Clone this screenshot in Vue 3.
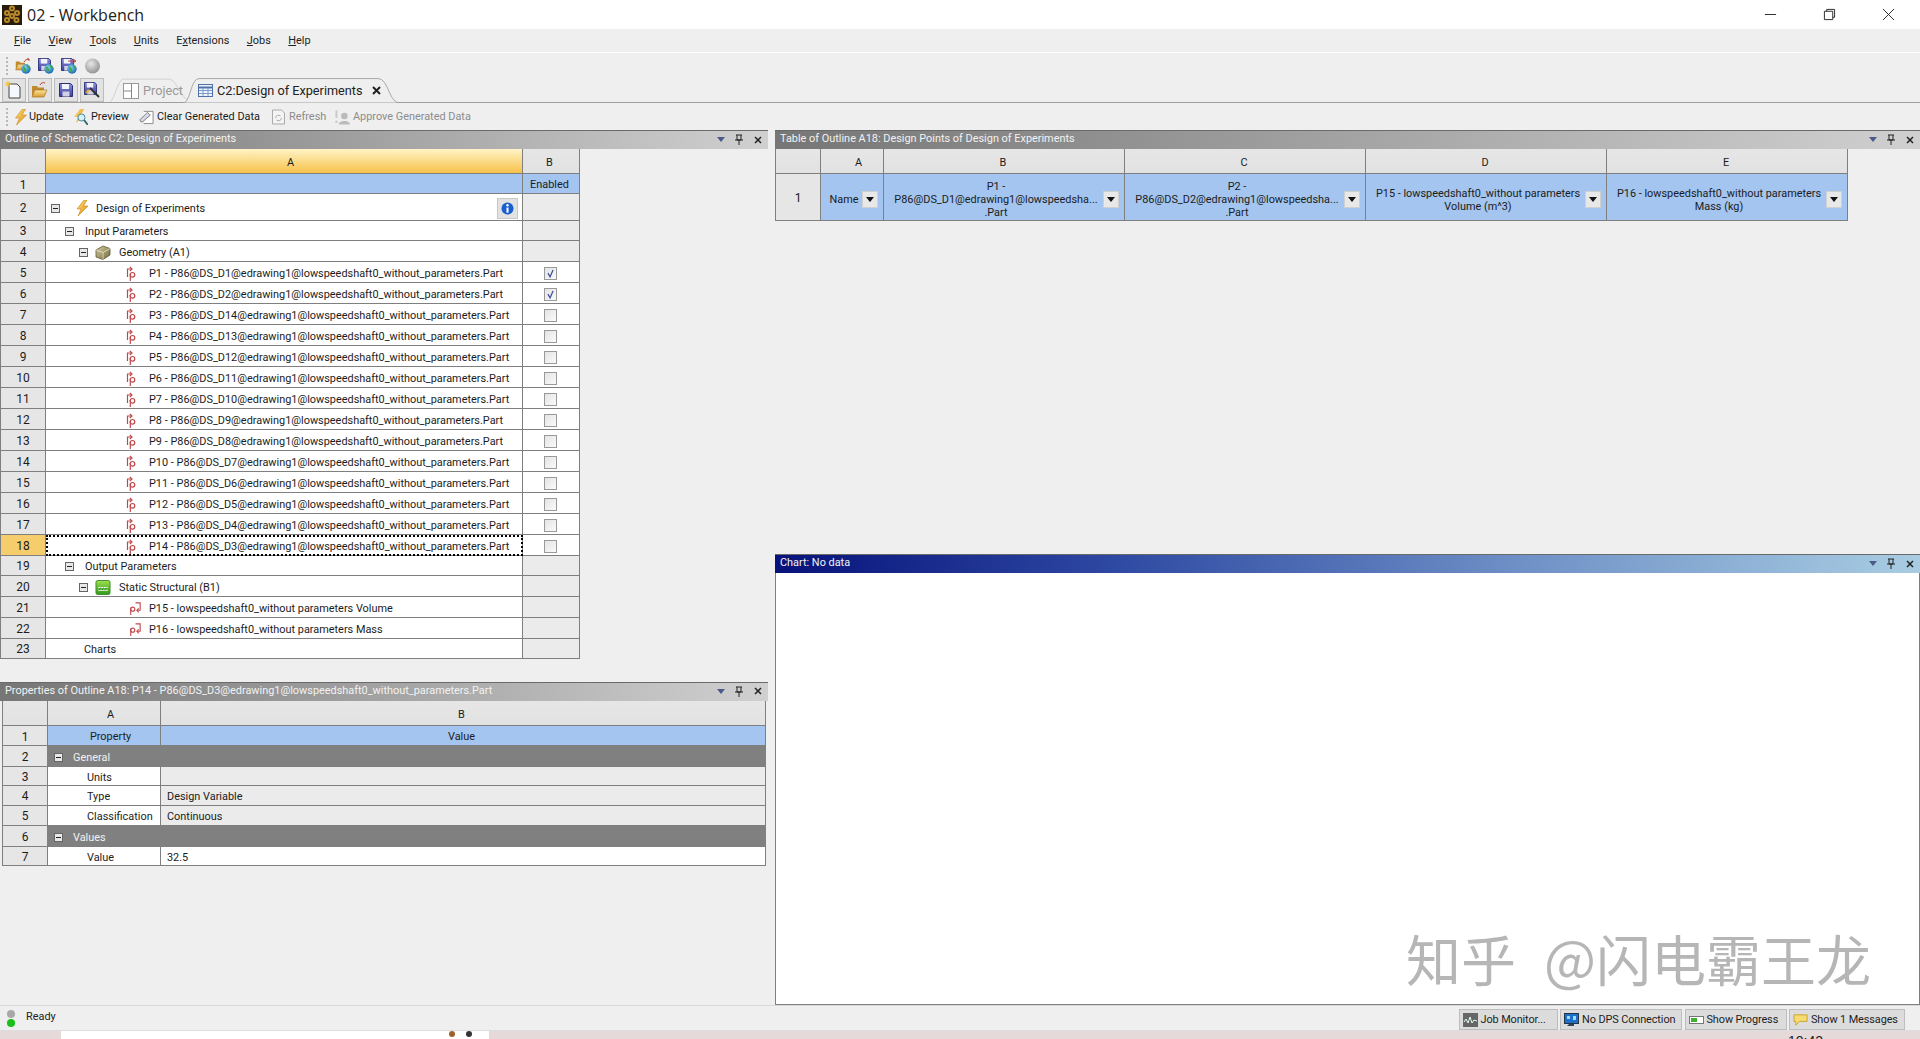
<script setup>
const menus = [
  { u: 'F', r: 'ile' }, { u: 'V', r: 'iew' }, { u: 'T', r: 'ools' }, { u: 'U', r: 'nits' },
  { b: 'E', u: 'x', r: 'tensions' }, { u: 'J', r: 'obs' }, { u: 'H', r: 'elp' },
]
const suffix = '@edrawing1@lowspeedshaft0_without_parameters.Part'
const inputs = [
  ['P1 - P86@DS_D1', true], ['P2 - P86@DS_D2', true], ['P3 - P86@DS_D14', false], ['P4 - P86@DS_D13', false],
  ['P5 - P86@DS_D12', false], ['P6 - P86@DS_D11', false], ['P7 - P86@DS_D10', false], ['P8 - P86@DS_D9', false],
  ['P9 - P86@DS_D8', false], ['P10 - P86@DS_D7', false], ['P11 - P86@DS_D6', false], ['P12 - P86@DS_D5', false],
  ['P13 - P86@DS_D4', false], ['P14 - P86@DS_D3', false],
]
const rows = [
  { n: 2, pad: 5, tog: true, icon: 'bolt', iconGap: 15, textGap: 7, text: 'Design of Experiments', info: true },
  { n: 3, pad: 19, tog: true, textGap: 11, text: 'Input Parameters' },
  { n: 4, pad: 33, tog: true, icon: 'cube', iconGap: 7, textGap: 8, text: 'Geometry (A1)' },
  ...inputs.map((p, i) => ({
    n: i + 5, pad: 80, icon: 'pin', iconGap: 0, textGap: 13, text: p[0] + suffix, check: true, checked: p[1], sel: i === 13,
  })),
  { n: 19, pad: 19, tog: true, textGap: 11, text: 'Output Parameters' },
  { n: 20, pad: 33, tog: true, icon: 'ss', iconGap: 7, textGap: 8, text: 'Static Structural (B1)' },
  { n: 21, pad: 84, icon: 'pout', iconGap: 0, textGap: 7, text: 'P15 - lowspeedshaft0_without parameters Volume' },
  { n: 22, pad: 84, icon: 'pout', iconGap: 0, textGap: 7, text: 'P16 - lowspeedshaft0_without parameters Mass' },
  { n: 23, pad: 38, textGap: 0, text: 'Charts' },
]
const pointCols = [
  { h: 'A', lines: ['Name'] },
  { h: 'B', lines: ['P1 -', 'P86@DS_D1@edrawing1@lowspeedsha...', '.Part'] },
  { h: 'C', lines: ['P2 -', 'P86@DS_D2@edrawing1@lowspeedsha...', '.Part'] },
  { h: 'D', lines: ['P15 - lowspeedshaft0_without parameters', 'Volume (m^3)'] },
  { h: 'E', lines: ['P16 - lowspeedshaft0_without parameters', 'Mass (kg)'] },
]
const props = [
  { n: 2, group: 'General' },
  { n: 3, a: 'Units', b: '' },
  { n: 4, a: 'Type', b: 'Design Variable' },
  { n: 5, a: 'Classification', b: 'Continuous' },
  { n: 6, group: 'Values' },
  { n: 7, a: 'Value', b: '32.5', edit: true },
]
</script>

<template>
  <div class="app">
    <svg class="defs" width="0" height="0" aria-hidden="true">
      <defs>
        <linearGradient id="gBolt" x1="0" y1="0" x2="1" y2="1"><stop offset="0" stop-color="#ffe27a" /><stop offset="1" stop-color="#e08a10" /></linearGradient>
        <linearGradient id="gDisk" x1="0" y1="0" x2="0" y2="1"><stop offset="0" stop-color="#8a8fe0" /><stop offset="1" stop-color="#3a3f9a" /></linearGradient>
        <radialGradient id="gGlobe" cx="0.4" cy="0.35" r="0.7"><stop offset="0" stop-color="#7fd8f0" /><stop offset="1" stop-color="#1560b0" /></radialGradient>
        <radialGradient id="gBall" cx="0.4" cy="0.35" r="0.7"><stop offset="0" stop-color="#e8e8e8" /><stop offset="1" stop-color="#8f8f8f" /></radialGradient>
        <linearGradient id="gFolder" x1="0" y1="0" x2="0" y2="1"><stop offset="0" stop-color="#fbe7a0" /><stop offset="1" stop-color="#d9992e" /></linearGradient>
        <linearGradient id="gCube" x1="0" y1="0" x2="1" y2="1"><stop offset="0" stop-color="#d8cfa0" /><stop offset="1" stop-color="#6e6a40" /></linearGradient>
        <linearGradient id="gSS" x1="0" y1="0" x2="0" y2="1"><stop offset="0" stop-color="#9fe050" /><stop offset="1" stop-color="#2f9a1e" /></linearGradient>
      </defs>
      <symbol id="bolt" viewBox="0 0 14 16"><path d="M9 0 2 9h4l-3 7 10-10H8.500L12 0z" fill="url(#gBolt)" stroke="#c9861c" stroke-width=".6" /></symbol>
      <symbol id="cube" viewBox="0 0 16 15"><path d="M1 5 8 1l7 2.500V10l-7 4.500L1 12z" fill="url(#gCube)" stroke="#5a5636" stroke-width=".8" /><path d="M1 5l7 2.500L15 3.500M8 7.500v7" fill="none" stroke="#f1ecd0" stroke-width=".7" /></symbol>
      <symbol id="ss" viewBox="0 0 16 16"><rect x=".5" y=".5" width="15" height="15" rx="2" fill="url(#gSS)" stroke="#3b8a22" /><path d="M3 8h10M3 11h10" stroke="#fff" stroke-width="1" /><path d="M4 11l1.500-3M7 11l1.500-3M10 11l1.500-3" stroke="#2f7a1a" stroke-width=".8" /></symbol>
      <symbol id="pin" viewBox="0 0 10 15"><g fill="none" stroke="#c0484a" stroke-width="1.200"><path d="M1.500 11V3H5" /><path d="M3.800 1 6 3 3.800 5" /><circle cx="6.500" cy="8.800" r="2.300" /><path d="M4.300 8v7" /></g></symbol>
      <symbol id="pout" viewBox="0 0 13 15"><g fill="none" stroke="#c0484a" stroke-width="1.200"><circle cx="3" cy="8.800" r="2.200" /><path d="M.800 7v8" /><path d="M6 2h5v8H8" /><path d="M9.500 7.800 7.400 10l2.100 2.200" /></g></symbol>
      <symbol id="minus" viewBox="0 0 9 9"><rect x=".5" y=".5" width="8" height="8" fill="#e8e8e8" stroke="#666" /><path d="M2 4.500h5" stroke="#222" /></symbol>
      <symbol id="globe" viewBox="0 0 10 10"><circle cx="5" cy="5" r="4.700" fill="url(#gGlobe)" /><path d="M2 3c2-1 2 1 3 2s-1 3-2 3M6 1c1 1 3 1 3 3-1 1-2 0-3-1z" fill="#43a84a" /></symbol>
      <symbol id="disk" viewBox="0 0 14 14"><path d="M.5.500h11l2 2v11H.5z" fill="url(#gDisk)" stroke="#2b2f75" /><rect x="3" y="1" width="7" height="5" fill="#f2f2fa" /><rect x="3.500" y="8.500" width="7" height="5" fill="#d0d0e0" /></symbol>
      <symbol id="folder" viewBox="0 0 17 15"><path d="M1 3h5l1 1.500h6V7H4L1 14z" fill="#c08a2c" /><path d="M4 7h12l-3 7H1z" fill="url(#gFolder)" stroke="#a97a22" stroke-width=".7" /></symbol>
      <symbol id="drop" viewBox="0 0 8 5"><path d="M0 0h8L4 5z" /></symbol>
    </svg>

    <header class="title">
      <svg class="logo" viewBox="0 0 20 20"><rect width="20" height="20" fill="#2a1c0c" /><g fill="#b98a2a"><circle cx="10" cy="3.500" r="3" /><circle cx="5" cy="8" r="3" /><circle cx="15" cy="8" r="3" /><circle cx="10" cy="11" r="3" /><circle cx="5" cy="15" r="3" /><circle cx="14.500" cy="15" r="3" /></g><g fill="#3a260c"><circle cx="10" cy="3.500" r="1" /><circle cx="5" cy="8" r="1" /><circle cx="15" cy="8" r="1" /><circle cx="10" cy="11" r="1" /><circle cx="5" cy="15" r="1" /><circle cx="14.500" cy="15" r="1" /></g></svg>
      <span class="app-name">02 - Workbench</span>
      <div class="win">
        <svg class="win-btn" viewBox="0 0 14 14"><path d="M1 7h12" stroke="#222" fill="none" /></svg>
        <svg class="win-btn" viewBox="0 0 14 14"><path d="M1.500 3.500h9v9h-9zM4 3.500V1.500h8.500v8.500h-2" stroke="#222" fill="none" /></svg>
        <svg class="win-btn" viewBox="0 0 14 14"><path d="M1 1l12 12M13 1 1 13" stroke="#222" fill="none" /></svg>
      </div>
    </header>

    <nav class="menu">
      <span v-for="m in menus" :key="m.r">{{ m.b }}<u>{{ m.u }}</u>{{ m.r }}</span>
    </nav>

    <div class="tb1">
      <i class="grip"></i>
      <span class="tb1-icon"><svg viewBox="0 0 17 16"><use href="#folder" x="0" y="1" width="13" height="12" /><path d="M9 4c1-2 3-3 5-3M14 1l-2 0M14 1v2" stroke="#c04030" fill="none" /><use href="#globe" x="6" y="6" width="10" height="10" /></svg></span>
      <span class="tb1-icon"><svg viewBox="0 0 17 16"><use href="#disk" x="0" y="0" width="13" height="13" /><use href="#globe" x="6" y="6" width="10" height="10" /></svg></span>
      <span class="tb1-icon"><svg viewBox="0 0 17 16"><use href="#disk" x="0" y="0" width="13" height="13" /><path d="M7 3h7M12 1l3 2-3 2" stroke="#c04030" fill="none" /><use href="#globe" x="6" y="6" width="10" height="10" /></svg></span>
      <span class="tb1-icon"><svg viewBox="0 0 17 16"><circle cx="8.500" cy="8" r="7.500" fill="url(#gBall)" /></svg></span>
    </div>

    <div class="tabrow">
      <button class="sq"><svg viewBox="0 0 18 18"><path d="M4 3h8l3 3v11H4z" fill="#f6f8ff" stroke="#444" /><path d="M3 0v6M0 3h6M1 1l4 4M5 1 1 5" stroke="#f4c430" /></svg></button>
      <button class="sq"><svg viewBox="0 0 18 18"><use href="#folder" x="0" y="2" width="17" height="15" /><path d="M9 4c1-2 3-3 5-2" stroke="#c04030" fill="none" /></svg></button>
      <button class="sq"><svg viewBox="0 0 18 18"><use href="#disk" x="2" y="2" width="14" height="14" /></svg></button>
      <button class="sq"><svg viewBox="0 0 18 18"><use href="#disk" x="1" y="1" width="13" height="13" /><path d="M7 7l9 9" stroke="#333" stroke-width="2" /><path d="M3 12l3-3" stroke="#e0b030" stroke-width="2" /></svg></button>
      <div class="tab tab-project">
        <svg class="tab-bg" viewBox="0 0 84 25"><path d="M0 24.500C5 22 8 1 14 .5H62C70 1 74 20 84 24.500" fill="none" stroke="#d0d0d0" /></svg>
        <svg class="tab-ic" viewBox="0 0 16 16"><rect x=".5" y=".5" width="15" height="15" fill="#fff" stroke="#999" /><path d="M8.500 1v14M1 8h7" stroke="#888" /></svg>
        <span>Project</span>
      </div>
      <div class="tab tab-active">
        <svg class="tab-bg" viewBox="0 0 214 25"><path d="M0 24.500C6 20 6 1 14 .5H194C204 1 204 20 213 24.500" fill="#efefef" stroke="#a8a8a8" /></svg>
        <svg class="tab-ic" viewBox="0 0 15 13"><rect x=".5" y=".5" width="14" height="12" fill="#eef4ff" stroke="#5070a8" /><path d="M.5 3.500h14" stroke="#5070a8" stroke-width="2" /><path d="M1 6.500h13M1 9.500h13M5 4v8M10 4v8" stroke="#7a9ccc" /></svg>
        <span>C2:Design of Experiments</span>
        <svg class="tab-x" viewBox="0 0 9 9"><path d="M1 1l7 7M8 1 1 8" stroke="#222" stroke-width="2" /></svg>
      </div>
    </div>

    <div class="tb2">
      <i class="grip"></i>
      <span class="act act-update"><svg viewBox="0 0 14 16"><use href="#bolt" width="14" height="16" /></svg>Update</span>
      <span class="act act-preview"><svg viewBox="0 0 15 16"><path d="M7 0 1 8h4l-2 6 8-8H8l3-6z" fill="url(#gBolt)" /><circle cx="8.500" cy="8.500" r="3.500" fill="#d6f0f6" stroke="#4a8a9a" /><path d="M11 11l4 5" stroke="#3a6a78" stroke-width="2" /></svg>Preview</span>
      <span class="act act-clear"><svg viewBox="0 0 16 16"><path d="M5 2h10v13H5" fill="#fff" stroke="#888" /><path d="M1 11 9 3l3 3-8 7H2z" fill="#d8d8e8" stroke="#777" /></svg>Clear Generated Data</span>
      <span class="act act-refresh off"><svg viewBox="0 0 14 16"><path d="M1 1h9l3 3v11H1z" fill="#f4f4f4" stroke="#aaa" /><path d="M4 9a3 3 0 0 1 5-2M10 9a3 3 0 0 1-5 2" stroke="#aaa" fill="none" /></svg>Refresh</span>
      <span class="act act-approve off"><svg viewBox="0 0 16 16"><path d="M1.500 1v8" stroke="#c8c8c8" stroke-width="2" /><circle cx="1.500" cy="13" r="1.300" fill="#c8c8c8" /><circle cx="10" cy="7" r="3.500" fill="#bbb" /><path d="M4 16c0-5 12-5 12 0z" fill="#bbb" /></svg>Approve Generated Data</span>
    </div>

    <main class="main">
      <section class="left">
        <div class="panel p-outline">
          <div class="bar"><span>Outline of Schematic C2: Design of Experiments</span><span class="bar-ctl"><svg class="c-drop" viewBox="0 0 8 5"><use href="#drop" /></svg><svg class="c-pin" viewBox="0 0 8 11"><path d="M1 1h6M2 1v5h4V1M0 6h8M4 6v5" stroke="#222" fill="none" /></svg><svg class="c-x" viewBox="0 0 8 8"><path d="M1 1l6 6M7 1 1 7" stroke="#222" stroke-width="1.500" /></svg></span></div>
          <div class="grid g-outline">
            <div class="c hd"></div><div class="c hd-sel colA">A</div><div class="c hd colB">B</div>
            <div class="c hd num">1</div><div class="c blue"></div><div class="c blue colB">Enabled</div>
            <template v-for="r in rows" :key="r.n">
              <div class="c num" :class="{ 'num-sel': r.sel }">{{ r.n }}</div>
              <div class="c tree" :class="{ sel: r.sel }" :style="{ paddingLeft: r.pad + 'px' }">
                <svg v-if="r.tog" class="tog"><use href="#minus" /></svg>
                <svg v-if="r.icon" class="ic" :class="'ic-' + r.icon" :style="{ marginLeft: r.iconGap + 'px' }"><use :href="'#' + r.icon" /></svg>
                <span :style="{ marginLeft: r.textGap + 'px' }">{{ r.text }}</span>
                <span v-if="r.info" class="info"><svg viewBox="0 0 14 14"><circle cx="7" cy="7" r="6.500" fill="#1a5fd0" /><circle cx="7" cy="3.500" r="1.300" fill="#fff" /><path d="M7 6v5.500" stroke="#fff" stroke-width="2.200" /></svg></span>
              </div>
              <div class="c flag" :class="{ inert: !r.check }">
                <span v-if="r.check" class="chk"><svg v-if="r.checked" viewBox="0 0 13 13"><path d="M3.500 6 6 10.500 9.500 2.500" fill="none" stroke="#3d4f9a" stroke-width="1.500" /></svg></span>
              </div>
            </template>
          </div>
        </div>
        <div class="panel p-props">
          <div class="bar"><span>Properties of Outline A18: P14 - P86@DS_D3@edrawing1@lowspeedshaft0_without_parameters.Part</span><span class="bar-ctl"><svg class="c-drop" viewBox="0 0 8 5"><use href="#drop" /></svg><svg class="c-pin" viewBox="0 0 8 11"><path d="M1 1h6M2 1v5h4V1M0 6h8M4 6v5" stroke="#222" fill="none" /></svg><svg class="c-x" viewBox="0 0 8 8"><path d="M1 1l6 6M7 1 1 7" stroke="#222" stroke-width="1.500" /></svg></span></div>
          <div class="grid g-props">
            <div class="c hd"></div><div class="c hd colA">A</div><div class="c hd colB">B</div>
            <div class="c hd num">1</div><div class="c blue colA">Property</div><div class="c blue colB">Value</div>
            <template v-for="p in props" :key="p.n">
              <div class="c num">{{ p.n }}</div>
              <div v-if="p.group" class="c group"><svg class="tog tog-g"><use href="#minus" /></svg>{{ p.group }}</div>
              <template v-else>
                <div class="c pa">{{ p.a }}</div>
                <div class="c pb" :class="{ edit: p.edit }">{{ p.b }}</div>
              </template>
            </template>
          </div>
        </div>
      </section>

      <section class="right">
        <div class="panel p-table">
          <div class="bar"><span>Table of Outline A18: Design Points of Design of Experiments</span><span class="bar-ctl"><svg class="c-drop" viewBox="0 0 8 5"><use href="#drop" /></svg><svg class="c-pin" viewBox="0 0 8 11"><path d="M1 1h6M2 1v5h4V1M0 6h8M4 6v5" stroke="#222" fill="none" /></svg><svg class="c-x" viewBox="0 0 8 8"><path d="M1 1l6 6M7 1 1 7" stroke="#222" stroke-width="1.500" /></svg></span></div>
          <div class="grid g-points">
            <div class="c hd"></div>
            <div v-for="col in pointCols" :key="col.h" class="c hd" :class="{ colName: col.h === 'A', colBack: col.h !== 'A' }">{{ col.h }}</div>
            <div class="c hd num">1</div>
            <div v-for="col in pointCols" :key="col.h + 'b'" class="c blue pt">
              <div class="pt-text"><div v-for="l in col.lines" :key="l">{{ l }}</div></div>
              <span class="dd"><svg viewBox="0 0 8 5"><use href="#drop" /></svg></span>
            </div>
          </div>
        </div>
        <div class="panel p-chart">
          <div class="bar bar-active"><span>Chart: No data</span><span class="bar-ctl"><svg class="c-drop" viewBox="0 0 8 5"><use href="#drop" /></svg><svg class="c-pin" viewBox="0 0 8 11"><path d="M1 1h6M2 1v5h4V1M0 6h8M4 6v5" stroke="#222" fill="none" /></svg><svg class="c-x" viewBox="0 0 8 8"><path d="M1 1l6 6M7 1 1 7" stroke="#222" stroke-width="1.500" /></svg></span></div>
          <div class="chart"><div class="mark"><span>知乎</span><span>@闪电霸王龙</span></div></div>
        </div>
      </section>
    </main>

    <footer class="status">
      <span class="light"><i class="l-off"></i><i class="l-on"></i></span>
      <span class="ready">Ready</span>
      <div class="st-btns">
        <span class="st b1"><svg viewBox="0 0 15 14"><rect width="15" height="14" fill="#666" /><path d="M1 9l2-3 2 4 2-6 2 6 2-3 3 1" stroke="#dfe" fill="none" /></svg>Job Monitor...</span>
        <span class="st b2"><svg viewBox="0 0 15 14"><rect x=".5" y=".5" width="14" height="10" fill="#1d70c8" stroke="#234" /><path d="M5 11h5v2H3" fill="#345" /><path d="M3 3h3v3H3zM9 3h3v4H9z" fill="#9fd8f8" /></svg>No DPS Connection</span>
        <span class="st b3"><svg viewBox="0 0 15 8"><rect x=".5" y=".5" width="14" height="7" fill="#fff" stroke="#777" /><rect x="2" y="2" width="6" height="4" fill="#3fb030" /></svg>Show Progress</span>
        <span class="st b4"><svg viewBox="0 0 16 13"><path d="M1 1h14v7H7l-4 4V8H1z" fill="#f6dc70" stroke="#c8a030" /></svg>Show 1 Messages</span>
      </div>
    </footer>
    <div class="taskbar">
      <div class="tk-white"><i class="sp sp1"></i><i class="sp sp2"></i></div>
      <span class="tk-time">10:42</span>
    </div>
  </div>
</template>

<style>
html, body { margin: 0; padding: 0; background: #efefef; overflow: hidden; }
</style>

<style scoped>
.app { width: 1920px; height: 1039px; display: flex; flex-direction: column; background: #efefef; color: #1c1c1c; font: 10.900px/13px Roboto, "Liberation Sans", Arial, sans-serif; overflow: hidden; position: relative; }
.defs { position: absolute; }
.title { height: 29px; flex: none; background: #fff; display: flex; align-items: center; padding-left: 2px; }
.logo { width: 20px; height: 20px; margin-top: 1px; }
.app-name { margin-left: 5px; font: 16px "Open Sans", sans-serif; color: #222; }
.win { margin-left: auto; display: flex; margin-right: 25px; gap: 46px; }
.win-btn { width: 13px; height: 13px; display: block; }
.menu { height: 23px; flex: none; display: flex; gap: 17.500px; align-items: center; padding-left: 14px; border-bottom: 1px solid #fff; color: #222; }
.menu u { text-decoration: underline; }
.tb1 { height: 25px; flex: none; display: flex; align-items: center; padding-left: 6px; }
.grip { width: 2px; height: 18px; margin-right: 7px; background: repeating-linear-gradient(#b8b8b8 0 2px, transparent 2px 4px); }
.tb1-icon { width: 17px; height: 16px; margin-right: 6px; }
.tb1-icon svg { display: block; width: 17px; height: 16px; }
.tabrow { height: 25px; flex: none; display: flex; align-items: flex-start; padding-left: 2px; box-sizing: border-box; border-bottom: 1px solid #9f9f9f; gap: 2px; }
.sq { width: 24px; height: 24px; padding: 2px; margin: 0; border: 1px solid #bcbcbc; background: #e2e2e2; box-sizing: border-box; }
.sq svg { display: block; width: 18px; height: 18px; }
.tab { position: relative; height: 25px; display: flex; align-items: center; font: 12.700px Roboto, "Liberation Sans", sans-serif; box-sizing: border-box; }
.tab-bg { position: absolute; left: 0; top: 0; width: 100%; height: 100%; }
.tab span, .tab-ic, .tab-x { position: relative; }
.tab-project { margin-left: 4px; width: 80px; padding-left: 13px; color: #999; margin-right: -4px; }
.tab-project .tab-ic { width: 16px; height: 16px; margin-right: 4px; }
.tab-active { width: 213px; padding-left: 13px; margin-left: -3px; color: #222; }
.tab-active .tab-ic { width: 15px; height: 13px; margin-right: 4px; }
.tab-x { width: 9px; height: 9px; margin-left: 9px; }
.tb2 { height: 27px; flex: none; display: flex; align-items: center; padding-left: 6px; }
.tb2 .grip { margin-right: 5px; }
.act { display: inline-flex; align-items: center; }
.act svg { width: 15px; height: 16px; margin-right: 3px; }
.act-update svg { margin-right: 1px; }
.act-update { width: 60px; }
.act-preview { width: 66px; }
.act-clear { width: 132px; }
.act-refresh { width: 64px; }
.off { color: #8c8c8c; }
.main { flex: none; height: 875px; display: flex; }
.left { width: 775px; flex: none; display: flex; flex-direction: column; }
.right { flex: 1; min-width: 0; display: flex; flex-direction: column; }
.panel { display: flex; flex-direction: column; min-height: 0; }
.p-outline { height: 546px; width: 768px; }
.p-props { margin-top: 6px; flex: 1; width: 768px; }
.p-table { height: 424px; }
.p-chart { flex: 1; }
.bar { height: 19px; flex: none; box-sizing: border-box; display: flex; align-items: center; justify-content: space-between; padding-left: 5px; padding-bottom: 3px; color: #f2f2f2; background: linear-gradient(90deg, #767676, #d0d0d0); border-top: 1px solid #6a6a6a; }
.p-props .bar { padding-bottom: 4px; }
.bar-active { background: linear-gradient(90deg, #07127a 0%, #2f4aa3 30%, #6f90c6 65%, #a8cde2 100%); }
.bar-ctl { display: flex; align-items: center; margin-top: 2px; }
.c-drop { width: 8px; height: 5px; fill: #4b5a88; }
.c-pin { width: 8px; height: 11px; margin-left: 10px; }
.c-x { width: 8px; height: 8px; margin-left: 11px; margin-right: 6px; }
.grid { display: grid; border-left: 1px solid #7f7f7f; align-self: flex-start; }
.g-outline { grid-template-columns: 45px 477px 57px; grid-template-rows: 25px 20px 27px 20px 21px repeat(14, 21px) 20px 21px 21px 21px 20px; }
.g-props { margin-left: 2px; grid-template-columns: 45px 113px 605px; grid-template-rows: 25px 20px 21px 19px 20px 20px 21px 19px; }
.g-points { grid-template-columns: 45px 63px 241px 241px 241px 241px; grid-template-rows: 25px 47px; }
.c { box-sizing: border-box; padding-top: 2px; border-right: 1px solid #7f7f7f; border-bottom: 1px solid #7f7f7f; display: flex; align-items: center; justify-content: center; background: #fff; white-space: nowrap; }
.hd { background: linear-gradient(#e6e6e6, #e2e2e2); padding-top: 3px; }
.num { background: #e6e6e6; font-size: 12px; }
.num-sel { background: #f6cd6c; }
.hd-sel { background: linear-gradient(#fff3c6, #f6c24a); padding-top: 3px; }
.colA { padding-left: 13px; }
.colB { padding-right: 3px; }
.colName { padding-left: 13px; }
.colBack { padding-right: 2px; }
.blue { background: #a3c5ef; }
.tree { justify-content: flex-start; position: relative; }
.sel { outline: 2px dotted #000; outline-offset: -2px; z-index: 1; }
.tog { width: 9px; height: 9px; flex: none; }
.ic { flex: none; }
.ic-bolt { width: 14px; height: 16px; }
.ic-cube { width: 16px; height: 15px; }
.ic-ss { width: 16px; height: 15px; }
.ic-pin { width: 10px; height: 15px; }
.ic-pout { width: 12px; height: 14px; }
.info { position: absolute; left: 451px; top: 4px; width: 21px; height: 21px; box-sizing: border-box; padding: 3px; background: #e2e2e2; border: 1px solid #c8c8c8; }
.info svg { display: block; width: 13px; height: 13px; }
.inert { background: #ebebeb; }
.flag { padding-right: 2px; }
.chk { width: 13px; height: 13px; box-sizing: border-box; border: 1px solid #999; background: linear-gradient(135deg, #e4e4e4, #fafafa); }
.chk svg { display: block; width: 11px; height: 11px; }
.group { grid-column: span 2; justify-content: flex-start; background: #808080; color: #f2f2f2; padding-left: 6px; }
.tog-g { margin-right: 10px; }
.pa { justify-content: flex-start; padding-left: 39px; }
.pb { justify-content: flex-start; background: #ebebeb; padding-left: 6px; }
.edit { background: #fff; }
.pt { justify-content: flex-start; padding: 4px 5px 0; }
.pt-text { flex: 1; text-align: center; padding-top: 1px; }
.dd { width: 16px; height: 17px; flex: none; display: flex; align-items: center; justify-content: center; background: #e8e8e8; border: 1px solid #d0d0d0; box-sizing: border-box; }
.dd svg { width: 8px; height: 5px; fill: #111; }
.chart { flex: 1; position: relative; background: #fff; box-sizing: border-box; border: 1px solid #7f7f7f; border-top: 0; }
.mark { position: absolute; left: 630px; top: 354px; display: flex; gap: 28px; font: 55px/60px "Noto Sans CJK SC", sans-serif; color: #b6b6b6; white-space: nowrap; }
.status { height: 25px; flex: none; display: flex; align-items: center; box-sizing: border-box; border-top: 1px solid #d8d8d8; padding-left: 7px; }
.light { display: flex; flex-direction: column; width: 8px; gap: 1px; }
.light i { width: 8px; height: 8px; border-radius: 50%; display: block; }
.l-off { background: #a8a8a8; }
.l-on { background: #18c018; }
.ready { margin-left: 11px; color: #222; margin-top: -4px; }
.st-btns { margin-left: auto; display: flex; gap: 2.500px; margin-right: 15px; align-self: flex-end; margin-bottom: 0; }
.st { height: 21px; box-sizing: border-box; display: flex; align-items: center; background: #dcdcdc; border: 1px solid #bdbdbd; padding-left: 3px; letter-spacing: -0.100px; }
.st svg { width: 15px; height: 14px; margin-right: 3px; }
.b1 { width: 99px; }
.b2 { width: 122px; }
.b3 { width: 102px; }
.b4 { width: 116px; }
.taskbar { height: 9px; flex: none; background: #e6d9d9; display: flex; border-top: 1px solid #ddd; box-sizing: border-box; overflow: hidden; }
.tk-white { margin-left: 61px; width: 428px; background: #fff; position: relative; }
.sp { position: absolute; top: 0; width: 6px; height: 6px; border-radius: 3px; }
.sp1 { left: 388px; background: #a0602a; }
.sp2 { left: 405px; background: #333; }
.tk-time { margin-left: 1299px; font: 14px/14px "Liberation Sans", sans-serif; color: #222; margin-top: 3px; }
</style>
